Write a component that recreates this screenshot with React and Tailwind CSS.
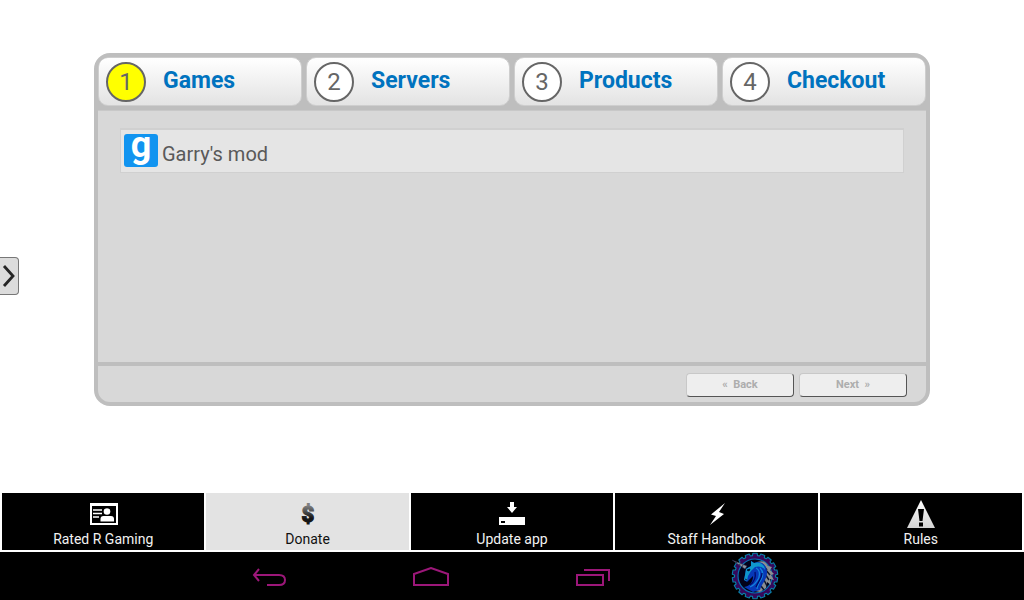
import React from "react";

const steps = ["Games", "Servers", "Products", "Checkout"];

function CardIcon() {
  return (
    <svg width="28" height="22" viewBox="0 0 28 22" aria-hidden="true">
      <rect width="28" height="22" fill="#fff" />
      <rect x="2" y="3" width="24" height="17" fill="#000" />
      <path d="M3 7h9M3 10.500h9M3 14h6" stroke="#fff" strokeWidth="1.600" />
      <circle cx="17" cy="8.500" r="3.300" fill="#fff" />
      <path d="M10.500 18.500v-2.500q0-3 3-3h7.500q3 0 3 3v2.500z" fill="#fff" />
    </svg>
  );
}

function DollarIcon() {
  return (
    <svg width="28" height="28" viewBox="0 0 28 28" aria-hidden="true">
      <defs>
        <linearGradient id="coin" x1="0" y1="0" x2="0" y2="1">
          <stop offset="0.150" stopColor="#808080" />
          <stop offset="0.650" stopColor="#151515" />
        </linearGradient>
      </defs>
      <text x="14" y="22" textAnchor="middle" fontSize="22" fontWeight="900" fontFamily="Roboto, sans-serif" fill="url(#coin)" stroke="url(#coin)" strokeWidth="1.200">$</text>
    </svg>
  );
}

function UpdateIcon() {
  return (
    <svg width="28" height="24" viewBox="0 0 28 24" aria-hidden="true" fill="#fff">
      <path d="M12 0h4v5h3l-5 6-5-6h3z" />
      <rect x="1" y="15" width="26" height="8" />
      <rect x="3" y="19" width="4" height="2" fill="#000" />
    </svg>
  );
}

function BoltIcon() {
  return (
    <svg width="18" height="24" viewBox="0 0 18 24" aria-hidden="true">
      <path d="M17 1 3 12.500l5 1.500L2 23 16 12l-5-2z" fill="#fff" />
    </svg>
  );
}

function WarningIcon() {
  return (
    <svg width="28" height="28" viewBox="0 0 28 28" aria-hidden="true">
      <defs>
        <linearGradient id="warn" x1="0" y1="0" x2="0" y2="1">
          <stop offset="0" stopColor="#fff" />
          <stop offset="1" stopColor="#d4d4d4" />
        </linearGradient>
      </defs>
      <path d="M14 0 28 28H0z" fill="url(#warn)" />
      <path d="M11 9h6l-1.500 12h-3zM12 22.500h4v4h-4z" fill="#000" />
    </svg>
  );
}

const sections = [
  { label: "Rated R Gaming", Icon: CardIcon },
  { label: "Donate", Icon: DollarIcon, active: true },
  { label: "Update app", Icon: UpdateIcon },
  { label: "Staff Handbook", Icon: BoltIcon },
  { label: "Rules", Icon: WarningIcon },
];

function gearPath(teeth, inner, outer) {
  const pts = [];
  for (let i = 0; i < teeth; i++) {
    [[-0.35, inner], [-0.27, outer], [0.27, outer], [0.35, inner]].forEach(([o, r]) => {
      const a = ((i + o) / teeth) * Math.PI * 2 - Math.PI / 2;
      pts.push(`${(24 + r * Math.cos(a)).toFixed(2)} ${(24 + r * Math.sin(a)).toFixed(2)}`);
    });
  }
  return `M${pts.join("L")}Z`;
}

function UnicornLogo() {
  return (
    <svg width="48" height="48" viewBox="0 0 48 48" aria-hidden="true">
      <path d={gearPath(18, 20.5, 22.8)} fill="#36085a" stroke="#087fa9" strokeWidth="1.100" strokeLinejoin="round" />
      <circle cx="24" cy="24" r="17" fill="#02021a" stroke="#0a6fb0" strokeWidth="1.200" />
      <path d="M26 10c6-2 9 0 11 4l4 1-2 3 4 4-3 1 3 5-4-1 1 6-4-3-1 6-6 4-5-1 5-10z" fill="#8a8f93" />
      <path d="M31 12l5 6M34 17l5 6M34 22l4 6M33 28l3 6M30 34l3 4" fill="none" stroke="#10162c" strokeWidth="1.500" />
      <path d="M20 9l3 2c7-3 13 2 13 9 0 8-5 11-7 18l-7 2-9-5c6-1 9-5 9-11l-4 4-2 2-3-2 1-5 1-6 5-3z" fill="#0738b8" />
      <path d="M20 9l3 2c6-2 11 2 11 7-3-4-7-4-10-3l-4 4-3 5-1 5-3-1 1-5 1-6 5-3z" fill="#0f96cc" />
      <path d="M25 16c5 3 4 9 1 13-2 3-4 5-7 6M29 16c5 5 2 11-1 15-1 2-2 4-2 6" fill="none" stroke="#1283dd" strokeWidth="1.300" />
      <path d="M24 20c1 5-1 10-5 13M31 21c0 5-4 9-6 14" fill="none" stroke="#020a66" strokeWidth="1.300" />
      <path d="M16 18l3-1-1 2zM14 27l2 1" fill="#010820" stroke="#010820" strokeWidth="0.800" />
      <path d="M1 8l15 6-2 3z" fill="#8b929c" stroke="#242647" strokeWidth="0.500" />
      <path d="M6 10l-1 1M9 12l-1 2M12 13l-1 2" stroke="#2c3154" />
    </svg>
  );
}

export default function App() {
  return (
    <div className="flex min-h-screen flex-col bg-white font-[Roboto,sans-serif]">
      <div className="relative flex flex-1 flex-col">
        <main className="flex-1 px-[94px] pt-[53px] pb-10">
          <section className="overflow-hidden rounded-2xl border-4 border-[#bebebe] bg-[#d8d8d8]">
            <ol className="grid grid-cols-4 gap-1 border-b border-[#c8c8c8] bg-[#bebebe] pb-1">
              {steps.map((name, i) => (
                <li key={name}>
                  <button
                    type="button"
                    className="flex h-[49px] w-full items-center gap-[17px] rounded-[10px] border border-[#cecece] bg-linear-to-b from-white to-[#e3e3e3] pl-[7px] text-left"
                  >
                    <span
                      className={
                        i === 0
                          ? "flex size-10 shrink-0 items-center justify-center rounded-full border-2 border-[#666] bg-[#ff0] text-2xl text-[#666]"
                          : "flex size-10 shrink-0 items-center justify-center rounded-full border-2 border-[#666] bg-white text-2xl text-[#666]"
                      }
                    >
                      {i + 1}
                    </span>
                    <span className="pb-0.5 text-[23px] leading-8 font-bold text-[#0073bf]">{name}</span>
                  </button>
                </li>
              ))}
            </ol>

            <ul className="min-h-[251px] px-[22px] pt-[17px]">
              <li>
                <button
                  type="button"
                  className="flex h-[45px] w-full items-center gap-1 border border-t-2 border-[#d0d0d0] bg-[#e5e5e5] px-[3px] text-left text-xl text-[#595959]"
                >
                  <svg width="34" height="34" viewBox="0 0 34 34" className="overflow-visible" aria-hidden="true">
                    <rect width="34" height="33" rx="3" fill="#1194f0" />
                    <text x="17" y="23" textAnchor="middle" fontSize="36" fontWeight="700" fontFamily="Roboto, sans-serif" fill="#fff">g</text>
                  </svg>
                  <span className="pt-1.5">Garry's mod</span>
                </button>
              </li>
            </ul>

            <div className="flex justify-end gap-[5px] border-t-4 border-[#bebebe] pt-[7px] pr-[19px] pb-[5px] text-[11px] font-bold text-[#adadad]">
              <button type="button" disabled className="h-6 w-[108px] rounded border border-t-[#c8c8c8] border-r-[#555] border-b-[#555] border-l-[#c8c8c8] bg-[#eee]">
                «&nbsp; Back
              </button>
              <button type="button" disabled className="h-6 w-[108px] rounded border border-t-[#c8c8c8] border-r-[#555] border-b-[#555] border-l-[#c8c8c8] bg-[#eee]">
                Next &nbsp;»
              </button>
            </div>
          </section>
        </main>

        <nav className="grid grid-cols-5 gap-0.5 p-0.5" aria-label="Sections">
          {sections.map(({ label, Icon, active }) => (
            <button
              key={label}
              type="button"
              className={
                active
                  ? "flex h-[57px] flex-col items-center bg-[#e3e3e3] pt-1.5 text-sm leading-5 text-[#111]"
                  : "flex h-[57px] flex-col items-center bg-black pt-1.5 text-sm leading-5 text-[#f2f2f2]"
              }
            >
              <span className="flex h-[29px] items-center justify-center pl-px">
                <Icon />
              </span>
              <span className="pt-px">{label}</span>
            </button>
          ))}
        </nav>

        <button
          type="button"
          aria-label="Open menu"
          className="absolute top-1/2 left-0 flex h-[38px] w-[19px] -translate-y-1/2 items-center justify-center rounded-r-sm border border-l-0 border-[#777] bg-[#dcdcdc]"
        >
          <svg width="18" height="24" viewBox="0 0 18 24" aria-hidden="true">
            <path d="M4 2l9 10-9 10" fill="none" stroke="#252525" strokeWidth="2.800" />
          </svg>
        </button>
      </div>

      <footer className="flex h-12 items-center justify-center bg-black">
        <button type="button" aria-label="Back" className="flex h-12 w-[162px] items-center justify-center pt-0.5">
          <svg width="34" height="20" viewBox="0 0 34 20" fill="none" stroke="#9c1779" strokeWidth="2" aria-hidden="true">
            <path d="M7 2 2 8l5 6M2 8h25q6 0 6 5t-6 5H15" />
          </svg>
        </button>
        <button type="button" aria-label="Home" className="flex h-12 w-[162px] items-center justify-center pt-0.5">
          <svg width="36" height="20" viewBox="0 0 36 20" fill="none" stroke="#9c1779" strokeWidth="2" aria-hidden="true">
            <path d="M1 18V7l17-6 17 6v11z" />
          </svg>
        </button>
        <button type="button" aria-label="Recent apps" className="flex h-12 w-[162px] items-center justify-center pt-0.5">
          <svg width="34" height="20" viewBox="0 0 34 20" fill="none" stroke="#9c1779" strokeWidth="2" aria-hidden="true">
            <path d="M1 8h26v10H1zM8 3h25v11" />
          </svg>
        </button>
        <button type="button" aria-label="Unicorn" className="flex h-12 w-[162px] items-center justify-center">
          <UnicornLogo />
        </button>
      </footer>
    </div>
  );
}
